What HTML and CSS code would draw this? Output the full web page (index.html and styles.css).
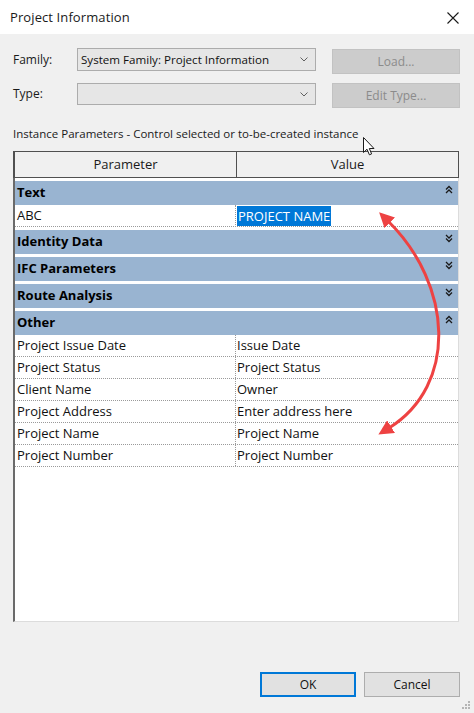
FILE: index.html
```html
<!DOCTYPE html>
<html lang="en">
<head>
<meta charset="utf-8">
<title>Project Information</title>
<link rel="stylesheet" href="styles.css">
</head>
<body>
<div class="dialog">
  <div class="titlebar">
    <span class="title">Project Information</span>
    <svg class="close" width="12" height="12" viewBox="0 0 12 12"><path d="M0.5 0.5 L11.5 11.5 M11.5 0.5 L0.5 11.5" stroke="#1a1a1a" stroke-width="1.1" fill="none"/></svg>
  </div>

  <div class="content">
    <div class="field-row">
      <span class="field-label">Family:</span>
      <div class="combo">
        <span class="combo-text">System Family: Project Information</span>
        <svg class="combo-caret" width="8" height="5" viewBox="0 0 8 5"><path d="M0.5 0.5 L4 4 L7.5 0.5" stroke="#606060" stroke-width="1" fill="none"/></svg>
      </div>
      <button class="btn btn-disabled">Load...</button>
    </div>

    <div class="field-row field-row-type">
      <span class="field-label">Type:</span>
      <div class="combo combo-empty">
        <span class="combo-text"></span>
        <svg class="combo-caret" width="8" height="5" viewBox="0 0 8 5"><path d="M0.5 0.5 L4 4 L7.5 0.5" stroke="#606060" stroke-width="1" fill="none"/></svg>
      </div>
      <button class="btn btn-disabled btn-tall">Edit Type...</button>
    </div>

    <div class="section-label">Instance Parameters - Control selected or to-be-created instance</div>

    <div class="grid">
      <div class="grid-head">
        <div class="head-cell head-param">Parameter</div>
        <div class="head-cell">Value</div>
      </div>
      <div class="grid-body">
        <div class="group">
          <span>Text</span>
          <svg class="chev" width="8" height="9" viewBox="0 0 8 9"><path d="M1 4.5 L4 1.5 L7 4.5 M1 8 L4 5 L7 8" stroke="#1a1a1a" stroke-width="1.3" fill="none"/></svg>
        </div>
        <div class="row">
          <div class="cell">ABC</div>
          <div class="cell cell-value"><span class="selected">PROJECT NAME</span></div>
        </div>

        <div class="group">
          <span>Identity Data</span>
          <svg class="chev" width="8" height="9" viewBox="0 0 8 9"><path d="M1 1 L4 4 L7 1 M1 4.5 L4 7.5 L7 4.5" stroke="#1a1a1a" stroke-width="1.3" fill="none"/></svg>
        </div>
        <div class="group">
          <span>IFC Parameters</span>
          <svg class="chev" width="8" height="9" viewBox="0 0 8 9"><path d="M1 1 L4 4 L7 1 M1 4.5 L4 7.5 L7 4.5" stroke="#1a1a1a" stroke-width="1.3" fill="none"/></svg>
        </div>
        <div class="group">
          <span>Route Analysis</span>
          <svg class="chev" width="8" height="9" viewBox="0 0 8 9"><path d="M1 1 L4 4 L7 1 M1 4.5 L4 7.5 L7 4.5" stroke="#1a1a1a" stroke-width="1.3" fill="none"/></svg>
        </div>
        <div class="group">
          <span>Other</span>
          <svg class="chev" width="8" height="9" viewBox="0 0 8 9"><path d="M1 4.5 L4 1.5 L7 4.5 M1 8 L4 5 L7 8" stroke="#1a1a1a" stroke-width="1.3" fill="none"/></svg>
        </div>
        <div class="row row-flush">
          <div class="cell">Project Issue Date</div>
          <div class="cell cell-value">Issue Date</div>
        </div>
        <div class="row">
          <div class="cell">Project Status</div>
          <div class="cell cell-value">Project Status</div>
        </div>
        <div class="row">
          <div class="cell">Client Name</div>
          <div class="cell cell-value">Owner</div>
        </div>
        <div class="row">
          <div class="cell">Project Address</div>
          <div class="cell cell-value">Enter address here</div>
        </div>
        <div class="row">
          <div class="cell">Project Name</div>
          <div class="cell cell-value">Project Name</div>
        </div>
        <div class="row">
          <div class="cell">Project Number</div>
          <div class="cell cell-value">Project Number</div>
        </div>
      </div>
    </div>

    <div class="footer">
      <button class="btn btn-default">OK</button>
      <button class="btn">Cancel</button>
    </div>
  </div>

  <!-- annotation: curved double-headed arrow linking the two name fields -->
  <svg class="annotation" width="474" height="713" viewBox="0 0 474 713">
    <defs>
      <marker id="head" viewBox="0 0 12 12" refX="2" refY="6" markerWidth="5" markerHeight="5" orient="auto-start-reverse">
        <path d="M0 0 L12 6 L0 12 Z" fill="#ee4242"/>
      </marker>
    </defs>
    <path d="M388 221 C453 285 458 385 389 428" stroke="#ee4242" stroke-width="3" fill="none" stroke-linecap="round" marker-start="url(#head)" marker-end="url(#head)"/>
  </svg>

  <!-- mouse pointer -->
  <svg class="pointer" width="12" height="19" viewBox="0 0 12 19">
    <path d="M0.5 0.5 L0.5 15.5 L4 12.2 L6.4 17.8 L8.6 16.9 L6.3 11.5 L11 11.5 Z" fill="#ffffff" stroke="#1a1a1a" stroke-width="1"/>
  </svg>

  <!-- size grip -->
  <svg class="grip" width="10" height="10" viewBox="0 0 10 10">
    <rect x="7" y="1" width="2" height="2" fill="#b5b5b5"/>
    <rect x="4" y="4" width="2" height="2" fill="#b5b5b5"/>
    <rect x="7" y="4" width="2" height="2" fill="#b5b5b5"/>
    <rect x="1" y="7" width="2" height="2" fill="#b5b5b5"/>
    <rect x="4" y="7" width="2" height="2" fill="#b5b5b5"/>
    <rect x="7" y="7" width="2" height="2" fill="#b5b5b5"/>
  </svg>
</div>
</body>
</html>
```

FILE: styles.css
```css
* {
  box-sizing: border-box;
}

html, body {
  margin: 0;
  padding: 0;
}

body {
  width: 474px;
  height: 713px;
  background: #f0f0f0;
  font-family: "Open Sans", "Noto Sans", "Liberation Sans", sans-serif;
  color: #000;
  overflow: hidden;
}

.dialog {
  position: relative;
  width: 474px;
  height: 713px;
  display: flex;
  flex-direction: column;
}

/* title bar */
.titlebar {
  height: 34px;
  background: #ffffff;
  display: flex;
  align-items: center;
  justify-content: space-between;
  padding: 0 15px 0 10px;
}

.title {
  font-size: 13px;
  color: #1a1a1a;
  letter-spacing: 0.1px;
}

.close {
  display: block;
  margin-top: 1px;
}

/* dialog content */
.content {
  padding: 14px 14px 0 13px;
  display: flex;
  flex-direction: column;
}

.field-row {
  display: flex;
  align-items: flex-start;
  height: 26px;
}

.field-row-type {
  margin-top: 9px;
  height: 25px;
}

.field-label {
  width: 64px;
  font-size: 12px;
  line-height: 23px;
  color: #1a1a1a;
}

.field-row-type .field-label {
  line-height: 22px;
}

.combo {
  width: 239px;
  height: 23px;
  background: #e6e6e6;
  border: 1px solid #acacac;
  display: flex;
  align-items: center;
  justify-content: space-between;
  padding: 0 7px 0 3px;
}

.combo-empty {
  height: 22px;
}

.combo-text {
  font-size: 11.6px;
  color: #111;
}

.combo-caret {
  display: block;
}

.btn {
  font-family: inherit;
  font-size: 12px;
  width: 96px;
  height: 25px;
  background: #e1e1e1;
  border: 1px solid #adadad;
  color: #111;
  padding: 0;
  margin: 0;
}

.btn-disabled {
  width: 128px;
  margin-left: 16px;
  margin-top: 1px;
  background: #cccccc;
  border-color: #c2c2c2;
  color: #8b8b8b;
}

.btn-tall {
  margin-top: 0;
}

.btn-default {
  border: 2px solid #0078d7;
}

.section-label {
  margin-top: 18px;
  font-size: 11.5px;
  line-height: 16px;
  color: #1a1a1a;
}

/* parameter grid */
.grid {
  margin-top: 9px;
  width: 446px;
  display: flex;
  flex-direction: column;
}

.grid-head {
  height: 27px;
  display: grid;
  grid-template-columns: 222px 1fr;
  border: 1px solid #505050;
  border-left-width: 2px;
  background: #f0f0f0;
}

.head-cell {
  font-size: 13px;
  line-height: 25px;
  text-align: center;
  color: #1a1a1a;
}

.head-param {
  border-right: 1px solid #505050;
}

.grid-body {
  height: 444px;
  background: #ffffff;
  border-left: 2px solid #6a6a6a;
  border-right: 1px solid #dcdcdc;
  border-bottom: 1px solid #dcdcdc;
}

.group {
  height: 24px;
  margin-top: 3px;
  background: #99b4d1;
  display: flex;
  justify-content: space-between;
  align-items: flex-start;
  padding: 0 5px 0 2px;
  font-size: 13px;
  font-weight: 700;
  line-height: 23px;
  color: #000;
}

.chev {
  display: block;
  margin-top: 4px;
}

.row {
  height: 22px;
  display: grid;
  grid-template-columns: 221px 1fr;
  border-bottom: 1px dotted #9a9a9a;
  font-size: 13px;
  line-height: 21px;
  color: #111;
}

.cell {
  padding-left: 2px;
  white-space: nowrap;
  border-right: 1px dotted #9a9a9a;
}

.cell-value {
  border-right: none;
  padding-left: 1px;
}

.selected {
  display: inline-block;
  background: #0078d7;
  color: #ffffff;
  line-height: 20px;
  padding: 0 1px;
  margin-top: 1px;
}

/* dialog buttons */
.footer {
  margin-top: 50px;
  display: flex;
  justify-content: flex-end;
  gap: 8px;
}

/* overlays */
.annotation {
  position: absolute;
  left: 0;
  top: 0;
  pointer-events: none;
}

.pointer {
  position: absolute;
  left: 363px;
  top: 137px;
}

.grip {
  position: absolute;
  right: 3px;
  bottom: 3px;
}
```
